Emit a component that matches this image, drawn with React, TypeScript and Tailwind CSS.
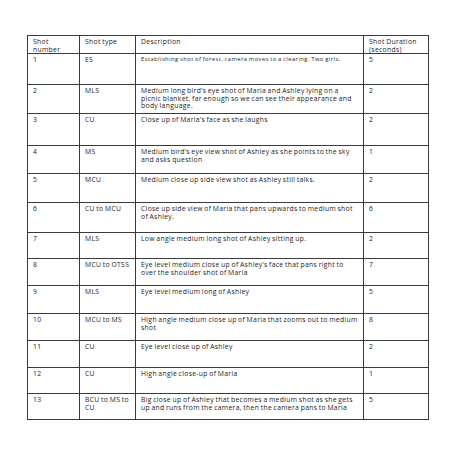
import React from 'react';

interface ShotRow {
  num: string;
  type: string;
  desc: string;
  dur: string;
  h: number;
  small?: boolean;
}

const rows: ShotRow[] = [
  { num: '1', type: 'ES', desc: 'Establishing shot of forest, camera moves to a clearing. Two girls,', dur: '5', h: 31, small: true },
  { num: '2', type: 'MLS', desc: 'Medium long bird\u2019s eye shot of Maria and Ashley lying on a picnic blanket, far enough so we can see their appearance and body language.', dur: '2', h: 29 },
  { num: '3', type: 'CU', desc: 'Close up of Maria\u2019s face as she laughs', dur: '2', h: 32 },
  { num: '4', type: 'MS', desc: 'Medium bird\u2019s eye view shot of Ashley as she points to the sky and asks question', dur: '1', h: 28 },
  { num: '5', type: 'MCU', desc: 'Medium close up side view shot as Ashley still talks.', dur: '2', h: 29 },
  { num: '6', type: 'CU to MCU', desc: 'Close up side view of Maria that pans upwards to medium shot of Ashley.', dur: '6', h: 30 },
  { num: '7', type: 'MLS', desc: 'Low angle medium long shot of Ashley sitting up.', dur: '2', h: 26 },
  { num: '8', type: 'MCU to OTSS', desc: 'Eye level medium close up of Ashley\u2019s face that pans right to over the shoulder shot of Maria', dur: '7', h: 27 },
  { num: '9', type: 'MLS', desc: 'Eye level medium long of Ashley', dur: '5', h: 28 },
  { num: '10', type: 'MCU to MS', desc: 'High angle medium close up of Maria that zooms out to medium shot', dur: '8', h: 27 },
  { num: '11', type: 'CU', desc: 'Eye level close up of Ashley', dur: '2', h: 27 },
  { num: '12', type: 'CU', desc: 'High angle close-up of Maria', dur: '1', h: 26 },
  { num: '13', type: 'BCU to MS to CU', desc: 'Big close up of Ashley that becomes a medium shot as she gets up and runs from the camera, then the camera pans to Maria', dur: '5', h: 26 },
];

const cell = 'border border-[#3a3a3a] align-top px-[5px] pt-[2px]';

export default function App() {
  return (
    <div className="w-[453px] h-[453px] bg-white pt-[35px] pl-[27px]" style={{ fontFamily: '"Open Sans", "Liberation Sans", sans-serif' }}>
      <table className="table-fixed border-collapse text-[6.8px] leading-[7.6px] tracking-[0.32px] [word-spacing:-0.6px] font-medium text-[#222]">
        <colgroup>
          <col className="w-[52px]" />
          <col className="w-[56px]" />
          <col className="w-[228px]" />
          <col className="w-[65px]" />
        </colgroup>
        <tbody>
          <tr className="h-[18px]">
            <td className={cell}>Shot<br />number</td>
            <td className={cell}>Shot type</td>
            <td className={cell}>Description</td>
            <td className={cell}>Shot Duration (seconds)</td>
          </tr>
          {rows.map((r) => (
            <tr key={r.num} style={{ height: r.h }}>
              <td className={cell}>{r.num}</td>
              <td className={cell + ' pr-[2px]'}>{r.type}</td>
              <td className={cell + (r.small ? ' text-[5.8px] tracking-[0.45px]' : '')}>{r.desc}</td>
              <td className={cell}>{r.dur}</td>
            </tr>
          ))}
        </tbody>
      </table>
    </div>
  );
}
